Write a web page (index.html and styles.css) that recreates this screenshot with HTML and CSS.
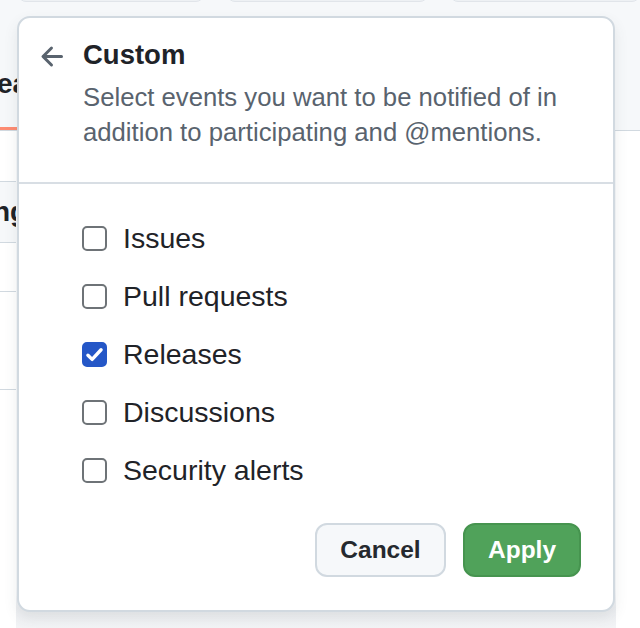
FILE: index.html
```html
<!DOCTYPE html>
<html lang="en">
<head>
<meta charset="utf-8">
<title>Custom notifications</title>
<link rel="stylesheet" href="styles.css">
</head>
<body>
<div class="page">
  <header class="repo-head">
    <div class="actions">
      <span class="act act-1"></span>
      <span class="act act-2"></span>
      <span class="act act-3"></span>
    </div>
    <nav class="tabs">
      <span class="tab">ea</span>
    </nav>
  </header>
  <main class="content">
    <section class="box">
      <div class="box-head"><span class="box-title">ng</span></div>
      <div class="box-row"></div>
      <div class="box-row tall"></div>
      <div class="box-row last"></div>
    </section>
  </main>

  <div class="backdrop">
    <div class="panel" role="dialog" aria-label="Custom">
      <div class="panel-header">
        <button class="back" aria-label="Back">
          <svg viewBox="0 0 16 16" width="32" height="32" aria-hidden="true"><path fill="currentColor" d="M7.78 12.53a.75.75 0 0 1-1.06 0L2.47 8.28a.75.75 0 0 1 0-1.06l4.25-4.25a.751.751 0 0 1 1.042.018.751.751 0 0 1 .018 1.042L4.81 7h7.44a.75.75 0 0 1 0 1.5H4.81l2.970 2.97a.75.75 0 0 1 0 1.06Z"/></svg>
        </button>
        <div class="head-text">
          <h2 class="title">Custom</h2>
          <p class="desc">Select events you want to be notified of in addition to participating and @mentions.</p>
        </div>
      </div>
      <ul class="events">
        <li class="event"><span class="cb"></span><span class="label">Issues</span></li>
        <li class="event"><span class="cb"></span><span class="label">Pull requests</span></li>
        <li class="event"><span class="cb checked"><svg viewBox="0 0 16 16" width="21" height="21" aria-hidden="true"><path d="M3 8.6l3.2 3.1L13 4.4" fill="none" stroke="#fff" stroke-width="2.6" stroke-linecap="round" stroke-linejoin="round"/></svg></span><span class="label">Releases</span></li>
        <li class="event"><span class="cb"></span><span class="label">Discussions</span></li>
        <li class="event"><span class="cb"></span><span class="label">Security alerts</span></li>
      </ul>
      <div class="panel-footer">
        <button class="btn btn-cancel">Cancel</button>
        <button class="btn btn-apply">Apply</button>
      </div>
    </div>
  </div>
</div>
</body>
</html>
```

FILE: styles.css
```css
* { box-sizing: border-box; }
html, body { margin: 0; padding: 0; }
body {
  width: 640px;
  height: 628px;
  overflow: hidden;
  background: #ffffff;
  font-family: "Liberation Sans", Arial, sans-serif;
  color: #1f2328;
}
.page {
  position: relative;
  width: 640px;
  height: 628px;
  overflow: hidden;
}

/* background page */
.repo-head {
  height: 131px;
  background: #f6f8fa;
  border-bottom: 1px solid #d1d9e0;
  display: flex;
  flex-direction: column;
}
.actions {
  display: flex;
  height: 2px;
}
.act {
  display: block;
  height: 32px;
  margin-top: -30px;
  background: #eef1f4;
  border: 1px solid #e1e5ea;
  border-radius: 8px;
}
.act-1 { margin-left: 18px; width: 196px; }
.act-2 { margin-left: 23px; width: 212px; }
.act-3 { margin-left: 22px; width: 200px; }
.tabs {
  margin-top: auto;
  display: flex;
}
.tab {
  display: block;
  margin-left: -3px;
  padding: 0 40px 25px 0;
  font-weight: 700;
  font-size: 28px;
  line-height: 36px;
  color: #1f2328;
  border-bottom: 3px solid #fd8c73;
}
.content {
  display: flex;
}
.box {
  margin-left: -10px;
  margin-top: 50px;
  width: 508px;
  border: 1px solid #d1d9e0;
  border-radius: 6px;
}
.box-head {
  height: 61px;
  background: #f6f8fa;
  border-bottom: 1px solid #d1d9e0;
  display: flex;
  align-items: center;
  padding-left: 2px;
}
.box-title {
  font-weight: 700;
  font-size: 28px;
  line-height: 36px;
}
.box-row {
  height: 49px;
  border-bottom: 1px solid #d1d9e0;
}
.box-row.tall { height: 98px; }
.box-row.last { height: 300px; border-bottom: 0; }

/* overlay */
.backdrop {
  position: absolute;
  top: 131px;
  left: 16px;
  width: 600px;
  height: 497px;
  background: linear-gradient(180deg, #f6f8fa 0%, #f6f8fa 92%, #eceef1 96%, #f3f4f6 100%);
}
.panel {
  position: absolute;
  top: -115px;
  left: 1px;
  width: 598px;
  height: 596px;
  background: #ffffff;
  border: 2px solid #d1d9e0;
  border-radius: 13px;
  box-shadow: 0 6px 14px rgba(66, 74, 83, 0.10);
  display: flex;
  flex-direction: column;
}
.panel-header {
  display: grid;
  grid-template-columns: 32px 1fr;
  column-gap: 14px;
  padding: 19px 30px 32px 18px;
  border-bottom: 2px solid #d8dee4;
}
.back {
  appearance: none;
  border: 0;
  background: none;
  padding: 0;
  margin: 4px 0 0;
  width: 32px;
  height: 32px;
  color: #59636e;
  display: block;
}
.back svg { display: block; }
.title {
  margin: 0;
  font-weight: 700;
  font-size: 27.5px;
  line-height: 36px;
  color: #1f2328;
}
.desc {
  margin: 7px 0 0;
  font-size: 25.7px;
  line-height: 35px;
  color: #59636e;
}
.events {
  list-style: none;
  margin: 0;
  padding: 25px 32px 0 63px;
}
.event {
  height: 58px;
  display: flex;
  align-items: center;
  gap: 16px;
}
.cb {
  width: 25px;
  height: 25px;
  border: 2px solid #6e7377;
  border-radius: 5px;
  background: #ffffff;
  display: flex;
  align-items: center;
  justify-content: center;
  flex: none;
}
.cb.checked {
  background: #2557c7;
  border-color: #2557c7;
}
.cb svg { display: block; }
.label {
  font-size: 28.5px;
  line-height: 36px;
  color: #1f2328;
}
.panel-footer {
  display: flex;
  justify-content: flex-end;
  gap: 17px;
  padding: 24px 32px 0;
}
.btn {
  appearance: none;
  height: 54px;
  padding: 0 22px;
  border-radius: 12px;
  font-family: "Liberation Sans", Arial, sans-serif;
  font-weight: 700;
  font-size: 24.5px;
  line-height: 30px;
  cursor: pointer;
}
.btn-cancel {
  width: 131px;
  background: #f6f8fa;
  border: 2px solid #d1d9e0;
  color: #25292e;
}
.btn-apply {
  width: 118px;
  background: #50a25a;
  border: 2px solid #46944f;
  color: #ffffff;
}
```
